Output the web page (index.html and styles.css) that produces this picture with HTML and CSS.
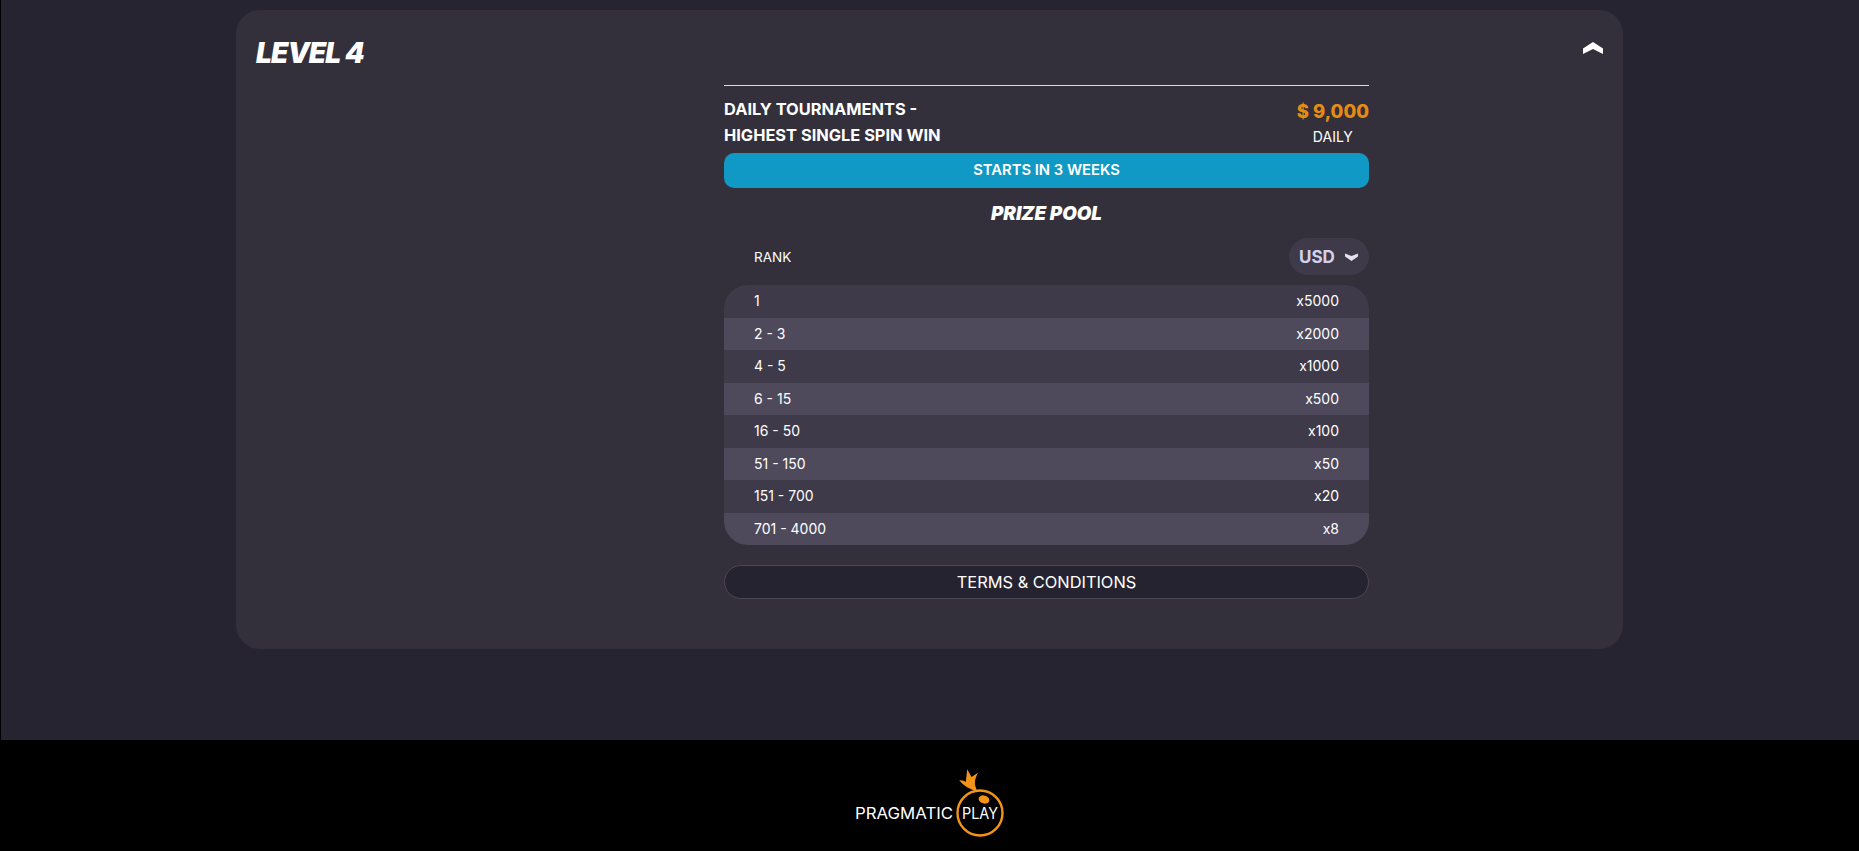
FILE: index.html
```html
<!DOCTYPE html>
<html>
<head>
<meta name="viewport" content="width=device-width, initial-scale=1">
<link rel="stylesheet" href="styles.css">
</head>
<body>

<div class="page">
  <div class="card">
    <div class="card__head">
      <h2 class="level">LEVEL 4</h2>
      <svg class="toggle" width="20" height="12" viewBox="0 0 20 12"><path d="M0 6.5 L10 0 L20 6.5 V12 L10 7 L0 12 Z" fill="#fff"/></svg>
    </div>

    <div class="tournament">
      <div class="summary">
        <div class="summary__name">DAILY TOURNAMENTS -<br>HIGHEST SINGLE SPIN WIN</div>
        <div class="summary__prize">
          <div class="amount">$ 9,000</div>
          <div class="period">DAILY</div>
        </div>
      </div>

      <div class="status">STARTS IN 3 WEEKS</div>

      <h3 class="pool-title">PRIZE POOL</h3>

      <div class="table-head">
        <span>RANK</span>
        <div class="currency">
          USD
          <svg width="13" height="8" viewBox="0 0 13 8"><path d="M0 0.5 L6.5 3 L13 0.5 V3.5 L6.5 8 L0 3.5 Z" fill="#e4e2f0"/></svg>
        </div>
      </div>

      <div class="ranks">
        <div class="rank"><span>1</span><span>x5000</span></div>
        <div class="rank"><span>2 - 3</span><span>x2000</span></div>
        <div class="rank"><span>4 - 5</span><span>x1000</span></div>
        <div class="rank"><span>6 - 15</span><span>x500</span></div>
        <div class="rank"><span>16 - 50</span><span>x100</span></div>
        <div class="rank"><span>51 - 150</span><span>x50</span></div>
        <div class="rank"><span>151 - 700</span><span>x20</span></div>
        <div class="rank"><span>701 - 4000</span><span>x8</span></div>
      </div>

      <div class="terms">TERMS &amp; CONDITIONS</div>
    </div>
  </div>
</div>

<div class="footer">
  <svg class="logo" width="148" height="76" viewBox="0 0 148 76">
    <circle cx="124" cy="45" r="22.5" fill="#000" stroke="#f39419" stroke-width="2.4"/>
    <ellipse cx="128" cy="31.5" rx="5.5" ry="4" fill="#f39419" transform="rotate(15 128 31.5)"/>
    <path d="M103.2 12.3 Q108 12 109.8 14 L111.2 1.3 L115.5 9 L122 4.7 Q118 12 119 17 L121 23 Q110 21 103.2 12.3 Z" fill="#f39419"/>
    <text class="logo__text" x="-1" y="51" textLength="98" lengthAdjust="spacingAndGlyphs">PRAGMATIC</text>
    <text class="logo__text" x="106" y="51" textLength="36" lengthAdjust="spacingAndGlyphs">PLAY</text>
  </svg>
</div>

</body>
</html>
```

FILE: styles.css
```css
body {
  margin: 0;
  background: #262430;
  color: #fff;
  font-family: Inter, "Open Sans", sans-serif;
}

.page {
  padding: 10px 0 91px;
  box-shadow: inset 1px 0 0 #000;
}

.card {
  width: 1387px;
  height: 639px;
  margin: 0 auto;
  background: #33303b;
  border-radius: 24px;
}

.card__head {
  display: flex;
  justify-content: space-between;
  align-items: flex-start;
  padding: 22px 20px 0;
  height: 32px;
}

.level {
  margin: 5px 0 0;
  font-size: 28px;
  font-weight: 900;
  font-style: italic;
  line-height: 32px;
  letter-spacing: -0.9px;
}

.toggle {
  margin-top: 10px;
}

.tournament {
  margin: 21px 254px 0 488px;
  border-top: 1px solid #dcdae4;
}

.summary {
  display: flex;
  justify-content: space-between;
  padding: 10px 0 4px;
}

.summary__name {
  font-size: 16.4px;
  font-weight: 700;
  line-height: 26px;
}

.summary__prize {
  text-align: center;
}

.amount {
  margin-top: 1px;
  color: #e58c14;
  font-size: 18.5px;
  font-weight: 800;
  line-height: 28px;
}

.period {
  font-size: 14px;
  line-height: 24px;
}

.status {
  height: 35px;
  line-height: 34px;
  background: #1099c4;
  border-radius: 10px;
  text-align: center;
  font-size: 14.8px;
  font-weight: 600;
}

.pool-title {
  margin: 12px 0 0;
  font-size: 18.8px;
  font-weight: 900;
  font-style: italic;
  line-height: 27px;
  text-align: center;
}

.table-head {
  display: flex;
  justify-content: space-between;
  align-items: center;
  margin-top: 11px;
  padding-left: 30px;
  font-size: 13.5px;
}

.currency {
  display: flex;
  align-items: center;
  gap: 10px;
  width: 80px;
  height: 37px;
  padding-left: 10px;
  box-sizing: border-box;
  background: #3e3a49;
  border-radius: 19px;
  color: #d4d2ea;
  font-size: 17px;
  font-weight: 700;
}

.ranks {
  margin-top: 10px;
  border-radius: 24px;
  overflow: hidden;
}

.rank {
  display: flex;
  justify-content: space-between;
  height: 32.5px;
  line-height: 32px;
  padding: 0 30px;
  background: #3e3a49;
  font-size: 14px;
}

.rank:nth-child(even) {
  background: #4e4a5c;
}

.terms {
  height: 32px;
  line-height: 32px;
  margin-top: 20px;
  background: #262330;
  border: 1px solid #4a4658;
  border-radius: 17px;
  text-align: center;
  font-size: 16.4px;
}

.footer {
  display: flex;
  justify-content: center;
  height: 111px;
  background: #000;
}

.logo {
  margin-top: 28px;
}

.logo__text {
  fill: #fff;
  font-size: 16px;
  font-weight: 400;
}
```
